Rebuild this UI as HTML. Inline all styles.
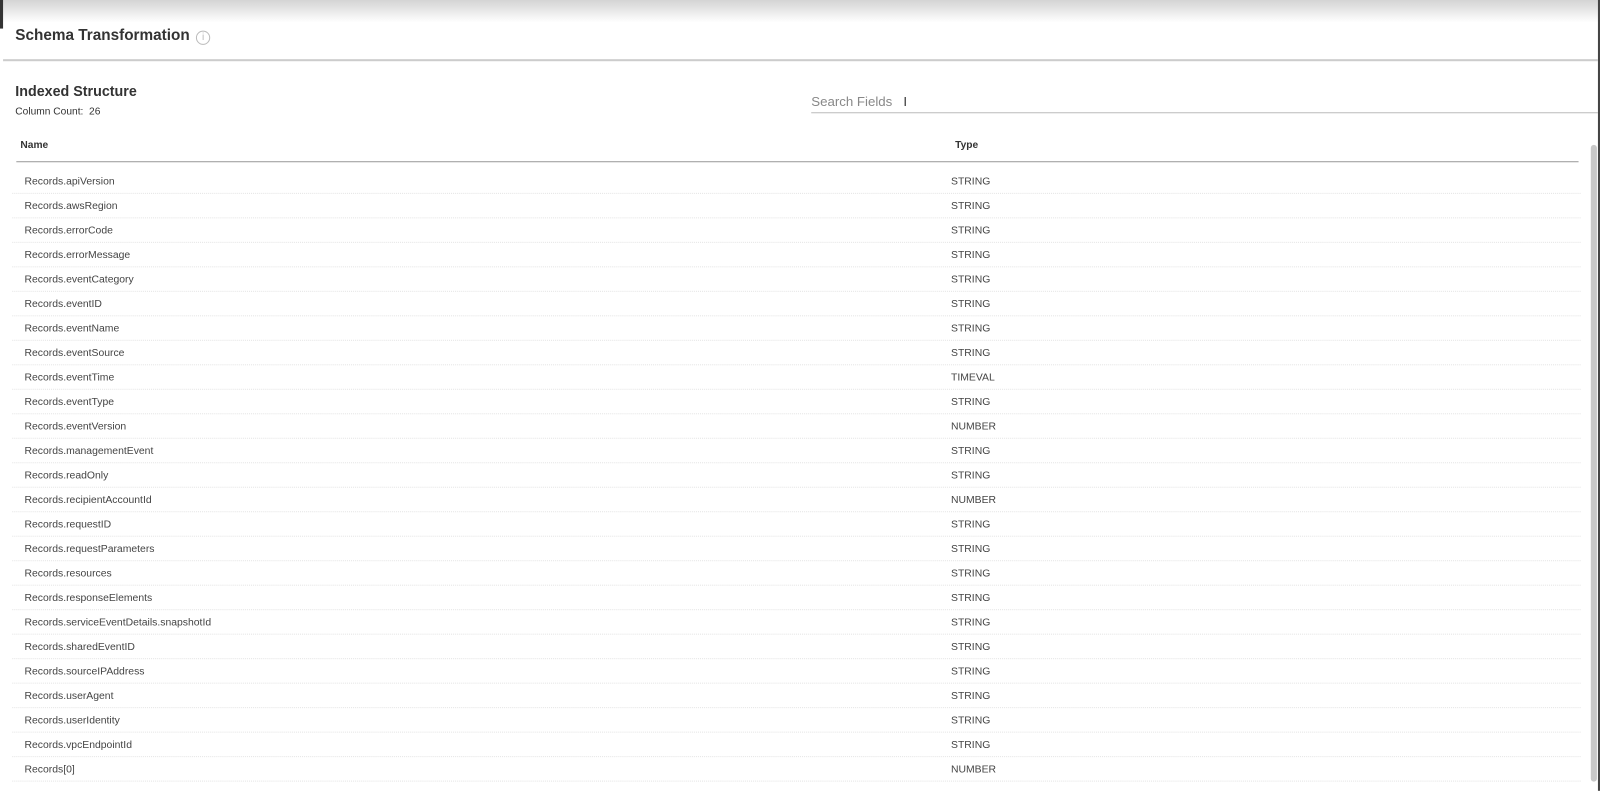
<!DOCTYPE html>
<html><head><style>
*{margin:0;padding:0;box-sizing:border-box}
body{width:1600px;height:791px;overflow:hidden;background:#fff;font-family:"Liberation Sans",sans-serif;color:#222;position:relative}
#w{position:absolute;left:0;top:0;width:1568px;height:775px;transform:scale(1.0204);transform-origin:0 0}
.top{position:absolute;left:0;top:0;width:1568px;height:22px;background:linear-gradient(#d4d4d4,#fff)}
.lb{position:absolute;left:0;top:0;width:3px;height:28px;background:#333}
.rb{position:absolute;left:1566px;top:0;width:2px;height:775px;background:#444}
.title{position:absolute;left:15px;top:26px;font-size:15px;font-weight:bold;color:#333}
.info{display:inline-block;width:14px;height:14px;border:1px solid #bbb;border-radius:50%;color:#bbb;font-size:10px;text-align:center;line-height:12px;vertical-align:0px;margin-left:2px;font-weight:normal}
.hl{position:absolute;left:3px;top:58px;width:1563px;height:2px;background:#ccc}
.h2{position:absolute;left:15px;top:81px;font-size:14px;font-weight:bold;color:#333}
.cc{position:absolute;left:15px;top:104px;font-size:10px;color:#333}
.search{position:absolute;left:795px;top:92px;font-size:13px;color:#888}
.sl{position:absolute;left:795px;top:110px;width:771px;height:1px;background:#bbb}
.th{position:absolute;top:137px;font-size:10px;font-weight:bold;color:#333}
.thl{position:absolute;left:16px;top:158px;width:1531px;height:1px;background:#999}
.row{position:absolute;left:12px;width:1537px;height:24px;border-bottom:1px dotted #e4e4e4;font-size:10.2px;color:#444}
.row span{position:absolute;top:7px}
.sb{position:absolute;left:1559px;top:142px;width:6px;height:624px;background:#c8c8c8;border-radius:3px}
</style></head><body><div id="w">
<div class="top"></div><div class="lb"></div><div class="rb"></div>
<div class="title">Schema Transformation <span class="info">i</span></div>
<div class="hl"></div>
<div class="h2">Indexed Structure</div>
<div class="cc">Column Count:&nbsp; 26</div>
<div class="search">Search Fields &nbsp;&nbsp;<span style="color:#333">I</span></div>
<div class="sl"></div>
<div class="th" style="left:20px">Name</div>
<div class="th" style="left:936px">Type</div>
<div class="thl"></div>
<div class="sb"></div>
<div class="row" style="top:166px"><span style="left:12px">Records.apiVersion</span><span style="left:920px">STRING</span></div>
<div class="row" style="top:190px"><span style="left:12px">Records.awsRegion</span><span style="left:920px">STRING</span></div>
<div class="row" style="top:214px"><span style="left:12px">Records.errorCode</span><span style="left:920px">STRING</span></div>
<div class="row" style="top:238px"><span style="left:12px">Records.errorMessage</span><span style="left:920px">STRING</span></div>
<div class="row" style="top:262px"><span style="left:12px">Records.eventCategory</span><span style="left:920px">STRING</span></div>
<div class="row" style="top:286px"><span style="left:12px">Records.eventID</span><span style="left:920px">STRING</span></div>
<div class="row" style="top:310px"><span style="left:12px">Records.eventName</span><span style="left:920px">STRING</span></div>
<div class="row" style="top:334px"><span style="left:12px">Records.eventSource</span><span style="left:920px">STRING</span></div>
<div class="row" style="top:358px"><span style="left:12px">Records.eventTime</span><span style="left:920px">TIMEVAL</span></div>
<div class="row" style="top:382px"><span style="left:12px">Records.eventType</span><span style="left:920px">STRING</span></div>
<div class="row" style="top:406px"><span style="left:12px">Records.eventVersion</span><span style="left:920px">NUMBER</span></div>
<div class="row" style="top:430px"><span style="left:12px">Records.managementEvent</span><span style="left:920px">STRING</span></div>
<div class="row" style="top:454px"><span style="left:12px">Records.readOnly</span><span style="left:920px">STRING</span></div>
<div class="row" style="top:478px"><span style="left:12px">Records.recipientAccountId</span><span style="left:920px">NUMBER</span></div>
<div class="row" style="top:502px"><span style="left:12px">Records.requestID</span><span style="left:920px">STRING</span></div>
<div class="row" style="top:526px"><span style="left:12px">Records.requestParameters</span><span style="left:920px">STRING</span></div>
<div class="row" style="top:550px"><span style="left:12px">Records.resources</span><span style="left:920px">STRING</span></div>
<div class="row" style="top:574px"><span style="left:12px">Records.responseElements</span><span style="left:920px">STRING</span></div>
<div class="row" style="top:598px"><span style="left:12px">Records.serviceEventDetails.snapshotId</span><span style="left:920px">STRING</span></div>
<div class="row" style="top:622px"><span style="left:12px">Records.sharedEventID</span><span style="left:920px">STRING</span></div>
<div class="row" style="top:646px"><span style="left:12px">Records.sourceIPAddress</span><span style="left:920px">STRING</span></div>
<div class="row" style="top:670px"><span style="left:12px">Records.userAgent</span><span style="left:920px">STRING</span></div>
<div class="row" style="top:694px"><span style="left:12px">Records.userIdentity</span><span style="left:920px">STRING</span></div>
<div class="row" style="top:718px"><span style="left:12px">Records.vpcEndpointId</span><span style="left:920px">STRING</span></div>
<div class="row" style="top:742px"><span style="left:12px">Records[0]</span><span style="left:920px">NUMBER</span></div>
</div></body></html>
